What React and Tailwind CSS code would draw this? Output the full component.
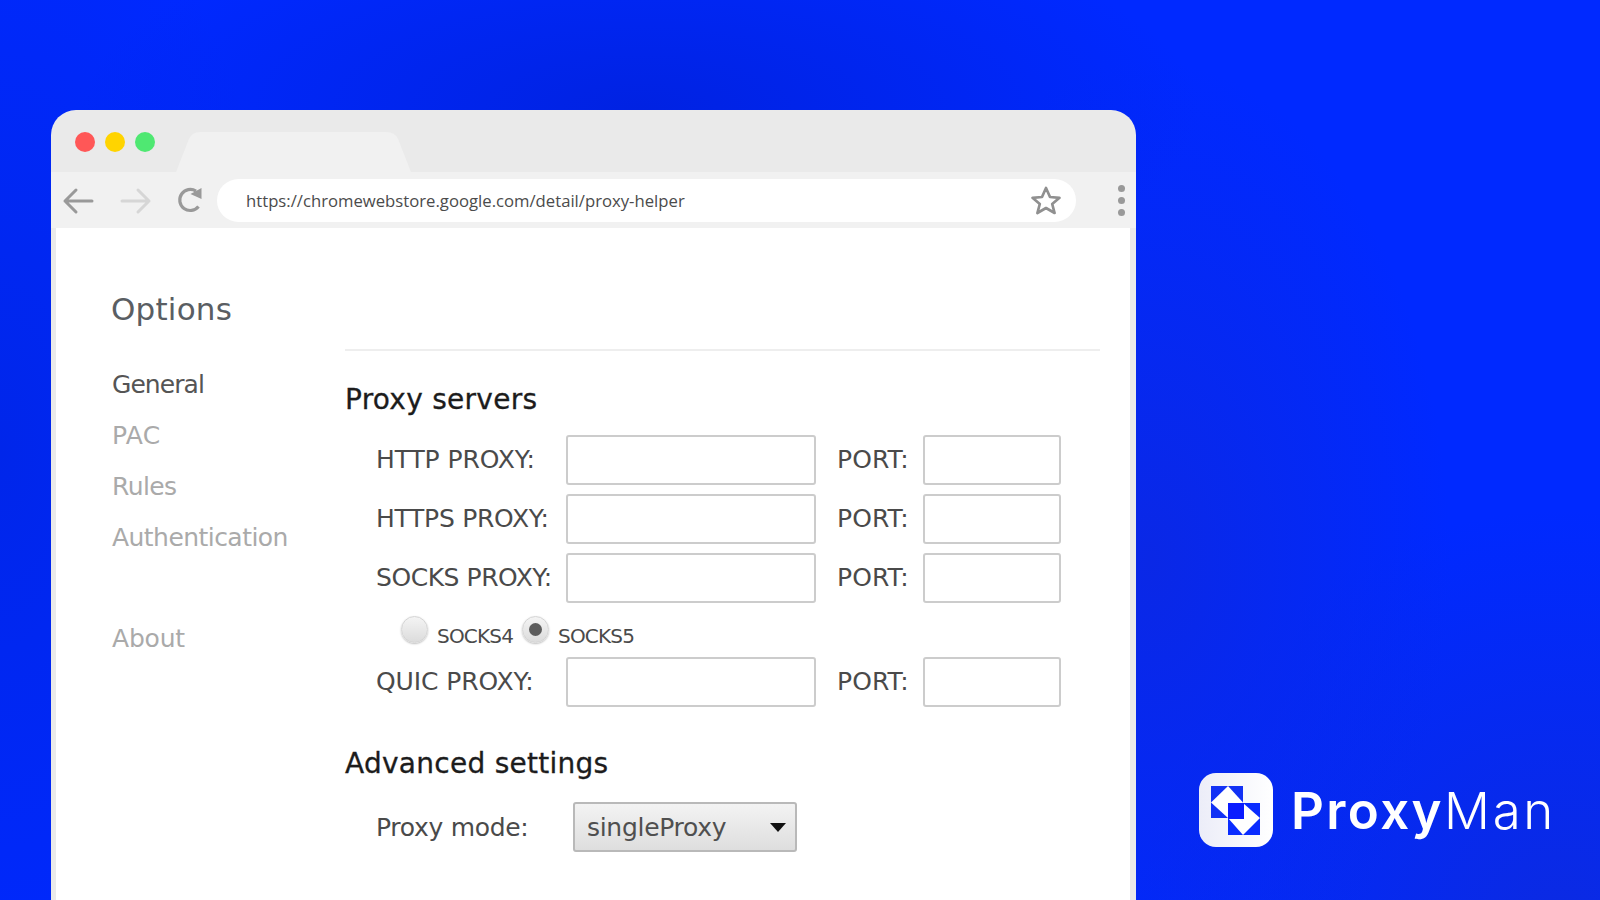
const dv = "font-['DejaVu_Sans','Liberation_Sans',sans-serif]";

function Row({ label, tracking = "tracking-[-0.1px]" }) {
  return (
    <div className="flex items-center h-[49px]">
      <span className={`w-[221px] pl-[31px] text-[25px] leading-none ${tracking} text-[#4a4a4a] whitespace-nowrap`}>{label}</span>
      <input className="w-[250px] h-[50px] shrink-0 border-2 border-[#cccccc] rounded-[3px] bg-white" />
      <span className="w-[107px] pl-[21px] text-[25px] leading-none tracking-[0.1px] text-[#4a4a4a]">PORT:</span>
      <input className="w-[138px] h-[50px] shrink-0 border-2 border-[#cccccc] rounded-[3px] bg-white" />
    </div>
  );
}

function Radio({ checked }) {
  return (
    <span className="w-[27px] h-[27px] shrink-0 rounded-full border border-[#d4d4d4] bg-gradient-to-b from-[#f4f4f4] to-[#dcdcdc] shadow-[0_1px_2px_rgba(0,0,0,0.25)] flex items-center justify-center">
      {checked && <span className="w-[13px] h-[13px] rounded-full bg-[#5c5c5c]" />}
    </span>
  );
}

function NavItem({ children, active, className = "tracking-[-0.4px]" }) {
  return (
    <div className={`h-[51px] flex items-center pl-[1px] text-[25px] leading-none ${active ? "text-[#555555]" : "text-[#aaaaaa]"} ${className}`}>
      {children}
    </div>
  );
}

function Logo() {
  return (
    <div className="flex items-center">
      <div className="w-[74px] h-[74px] rounded-[17px] bg-gradient-to-r from-[#ecedf8] to-white shrink-0">
        <svg viewBox="0 0 74 74" className="w-[74px] h-[74px]">
          <rect x="12" y="13" width="32" height="32" fill="#1231f5" />
          <rect x="29" y="30" width="32" height="32" fill="#0a2cff" />
          <path d="M29 13 L44 29.5 L29 45 L12 29.5 Z" fill="#ffffff" />
          <path d="M44 30 L61 45 L44 62 L29 45 Z" fill="#ffffff" />
          <rect x="29" y="30" width="16" height="16" fill="#0b1cff" />
        </svg>
      </div>
      <div className="ml-[18px] text-[51px] leading-none text-white font-['Inter',sans-serif] whitespace-nowrap">
        <span className="font-semibold tracking-[2.4px]">Proxy</span><span className="font-light tracking-[2.7px]">Man</span>
      </div>
    </div>
  );
}

export default function App() {
  return (
    <div className="w-[1600px] h-[900px] overflow-hidden flex bg-[#0029ff] bg-[radial-gradient(ellipse_560px_200px_at_640px_110px,#0022e2_0%,rgba(0,34,226,0)_100%),radial-gradient(ellipse_300px_500px_at_1150px_560px,#0a28e6_0%,rgba(10,40,230,0)_100%),radial-gradient(ellipse_420px_420px_at_1560px_930px,#0b2ae2_0%,rgba(11,42,226,0)_100%),radial-gradient(ellipse_300px_600px_at_0px_450px,#0026ea_0%,rgba(0,38,234,0)_100%)]">
      <div className={`ml-[51px] mt-[110px] w-[1085px] h-[790px] shrink-0 rounded-t-[25px] overflow-hidden bg-[#eaeaea] flex flex-col ${dv}`}>
        <div className="h-[62px] shrink-0 flex items-start pl-[24px] pt-[22px]">
          <div className="flex gap-[10px]">
            <span className="w-[20px] h-[20px] rounded-full bg-[#ff5757]" />
            <span className="w-[20px] h-[20px] rounded-full bg-[#ffd400]" />
            <span className="w-[20px] h-[20px] rounded-full bg-[#4fe872]" />
          </div>
          <svg width="236" height="40" viewBox="0 0 236 40" className="ml-[21px] shrink-0">
            <path d="M0 40 L13 7 Q16 0 24 0 H210 Q219 0 222 7 L235 40 Z" fill="#f1f1f1" />
          </svg>
        </div>
        <div className="h-[56px] shrink-0 bg-[#f1f1f1] flex items-center">
          <svg width="34" height="28" viewBox="0 0 34 28" className="ml-[10px] mt-[2px] shrink-0" fill="none" stroke="#999999" strokeWidth="3" strokeLinecap="round" strokeLinejoin="round">
            <path d="M4 14 H31 M15 3 L4 14 L15 25" />
          </svg>
          <svg width="34" height="28" viewBox="0 0 34 28" className="ml-[23px] mt-[2px] shrink-0" fill="none" stroke="#d6d6d6" strokeWidth="3" strokeLinecap="round" strokeLinejoin="round">
            <path d="M4 14 H31 M20 3 L31 14 L20 25" />
          </svg>
          <svg width="28" height="28" viewBox="0 0 28 28" className="ml-[24px] shrink-0" fill="none">
            <path d="M22.5 20.5 A10.5 10.5 0 1 1 20 5.2" stroke="#999999" strokeWidth="3.2" strokeLinecap="butt" />
            <path d="M14.5 8 L25.5 2 L25.5 13 Z" fill="#999999" />
          </svg>
          <div className="ml-[13px] w-[859px] h-[43px] shrink-0 rounded-full bg-white flex items-center justify-between pl-[29px] pr-[14px]">
            <span className="mt-[2px] font-['Open_Sans',sans-serif] text-[16.7px] text-[#4b4b4b] whitespace-nowrap">https://chromewebstore.google.com/detail/proxy-helper</span>
            <svg width="32" height="30" viewBox="0 0 32 30" fill="none" stroke="#909090" strokeWidth="2.7" strokeLinejoin="round">
              <path d="M16 3 L20 12 L29.5 12.8 L22.2 19 L24.6 28 L16 23 L7.4 28 L9.8 19 L2.5 12.8 L12 12 Z" />
            </svg>
          </div>
          <div className="ml-[42px] flex flex-col gap-[5px]">
            <span className="w-[7px] h-[7px] rounded-full bg-[#999999]" />
            <span className="w-[7px] h-[7px] rounded-full bg-[#999999]" />
            <span className="w-[7px] h-[7px] rounded-full bg-[#999999]" />
          </div>
        </div>
        <div className="flex-1 ml-[5px] mr-[6px] bg-white flex">
          <div className="w-[289px] shrink-0 pl-[55px] pt-[63px]">
            <div className="text-[31px] leading-[36px] tracking-[0.2px] text-[#5a5e63]">Options</div>
            <div className="mt-[32px]">
              <NavItem active className="tracking-[-0.95px]">General</NavItem>
              <NavItem className="tracking-[0.3px]">PAC</NavItem>
              <NavItem className="tracking-[-0.6px]">Rules</NavItem>
              <NavItem className="tracking-[-0.55px]">Authentication</NavItem>
              <NavItem className="mt-[50px] tracking-[-0.2px]">About</NavItem>
            </div>
          </div>
          <div className="w-[755px] shrink-0 pt-[121px]">
            <div className="h-[2px] bg-[#eeeeee]" />
            <div className="mt-[32px] text-[28px] leading-[34px] tracking-[0.27px] text-[#1c1c1c] [-webkit-text-stroke:0.3px_#1c1c1c]">Proxy servers</div>
            <div className="mt-[18px] flex flex-col gap-[10px]">
              <Row label="HTTP PROXY:" />
              <Row label="HTTPS PROXY:" tracking="tracking-[-0.27px]" />
              <Row label="SOCKS PROXY:" tracking="tracking-[-0.45px]" />
            </div>
            <div className="h-[55px] flex items-center pl-[56px]">
              <Radio />
              <span className="ml-[9px] mt-[12px] w-[85px] text-[20px] leading-none tracking-[-0.8px] text-[#4a4a4a]">SOCKS4</span>
              <Radio checked />
              <span className="ml-[9px] mt-[12px] text-[20px] leading-none tracking-[-0.8px] text-[#4a4a4a]">SOCKS5</span>
            </div>
            <Row label="QUIC PROXY:" />
            <div className="mt-[41px] text-[28px] leading-[34px] tracking-[0.27px] text-[#1c1c1c] [-webkit-text-stroke:0.3px_#1c1c1c]">Advanced settings</div>
            <div className="mt-[21px] flex items-center">
              <span className="w-[228px] pl-[31px] text-[25px] leading-none tracking-[-0.3px] text-[#4a4a4a]">Proxy mode:</span>
              <div className="w-[224px] h-[50px] border-2 border-[#b9b9b9] rounded-[3px] bg-gradient-to-b from-[#f3f3f3] to-[#dedede] flex items-center justify-between pl-[12px] pr-[9px]">
                <span className="text-[25px] leading-none tracking-[-0.3px] text-[#4f4f4f]">singleProxy</span>
                <svg width="16" height="9" viewBox="0 0 16 9"><path d="M0 0 H16 L8 9 Z" fill="#111111" /></svg>
              </div>
            </div>
          </div>
        </div>
      </div>
      <div className="ml-[63px] mt-[773px] self-start">
        <Logo />
      </div>
    </div>
  );
}
